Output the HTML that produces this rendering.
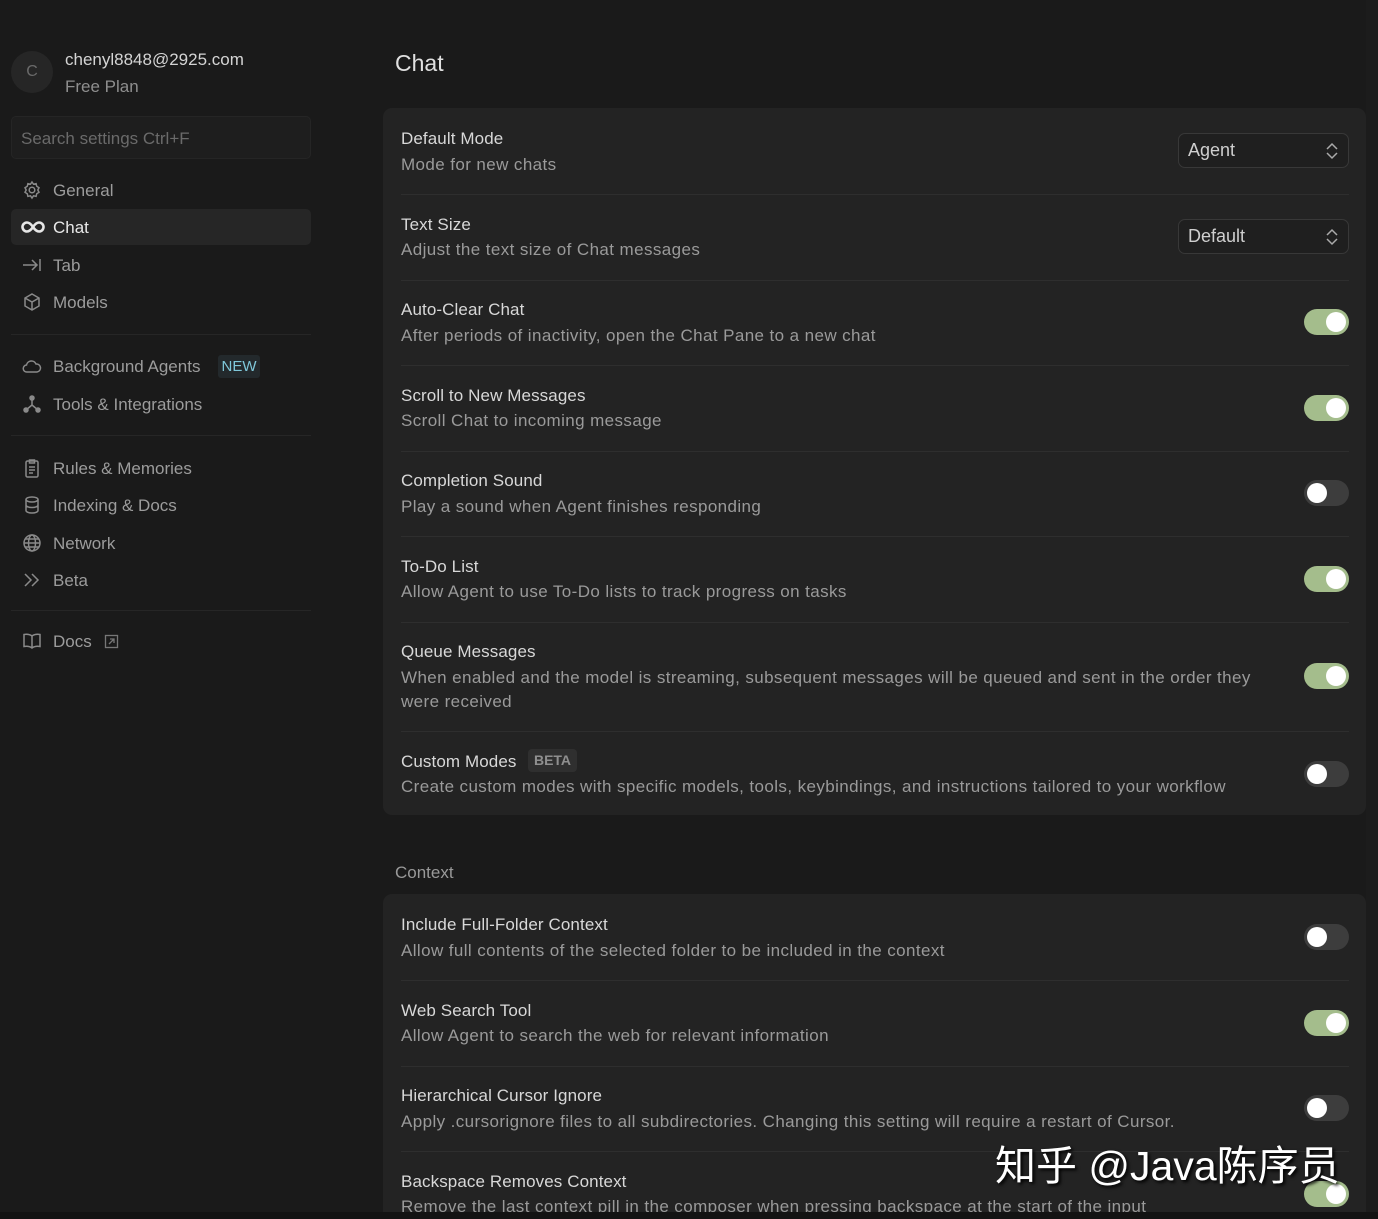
<!DOCTYPE html>
<html><head><meta charset="utf-8"><style>
*{margin:0;padding:0;box-sizing:border-box}
html,body{width:1378px;height:1219px;overflow:hidden}
body{background:#1a1a1a;font-family:"Liberation Sans","Noto Sans CJK SC",sans-serif;position:relative;color:#d6d6d6}
.a{position:absolute;white-space:nowrap}
.nav{font-size:17px;color:#9c9c9c}
.ic{position:absolute;left:22px;width:20px;height:20px}
.card{position:absolute;left:383px;width:983px;background:#232323;border-radius:9px;overflow:hidden}
.t{position:absolute;left:18px;font-size:17px;color:#d8d8d8;white-space:nowrap;letter-spacing:0.1px}
.d{position:absolute;left:18px;font-size:17px;color:#9a9a9a;white-space:nowrap;letter-spacing:0.4px}
.sep{position:absolute;left:18px;right:17px;height:1px;background:#2e2e2e}
.tg{position:absolute;left:921px;width:45px;height:26px;border-radius:13px}
.on{background:#a4bd8c}.off{background:#3d3d3d}
.tg:after{content:"";position:absolute;top:3px;width:20px;height:20px;border-radius:50%;background:#fff}
.on:after{right:3px}.off:after{left:3px}
.sel{position:absolute;left:795px;width:171px;height:35px;border:1px solid #383838;border-radius:7px;background:#1f1f1f;font-size:18px;color:#cfcfcf;padding:6px 9px}
.sel svg{position:absolute;right:9px;top:8px}
</style></head><body>
<div style="position:absolute;left:1366px;top:0;width:12px;height:1219px;background:#1c1c1c"></div>
<div class="a" style="left:11px;top:51px;width:42px;height:42px;border-radius:50%;background:#262626;color:#6a6a6a;font-size:16px;text-align:center;line-height:42px">C</div>
<div class="a" style="left:65px;top:50px;font-size:17px;color:#d4d4d4">chenyl8848@2925.com</div>
<div class="a" style="left:65px;top:77px;font-size:17px;color:#8e8e8e">Free Plan</div>
<div class="a" style="left:11px;top:116px;width:300px;height:43px;background:#1e1e1e;border:1px solid #252525;border-radius:5px"></div>
<div class="a" style="left:21px;top:129px;font-size:17px;color:#6a6a6a">Search settings Ctrl+F</div>
<div class="a" style="left:11px;top:209px;width:300px;height:36px;background:#262626;border-radius:5px"></div>
<svg class="ic" style="top:180px" viewBox="0 0 20 20" fill="none" stroke="#8a8a8a" stroke-width="1.5"><circle cx="10" cy="10" r="2.8"/><path d="M10 2l1.5 2.2 2.6-.6.6 2.6L17 7.7l-1.2 2.3L17 12.3l-2.3 1.5-.6 2.6-2.6-.6L10 18l-1.5-2.2-2.6.6-.6-2.6L3 12.3 4.2 10 3 7.7l2.3-1.5.6-2.6 2.6.6z"/></svg>
<div class="a nav" style="left:53px;top:181px">General</div>
<svg class="ic" style="top:217px;width:24px;left:21px" viewBox="0 0 24 20" fill="none" stroke="#e6e6e6" stroke-width="2.6"><path d="M12 10c-2-3-4-4.5-6-4.5a4.5 4.5 0 000 9c2 0 4-1.5 6-4.5s4-4.5 6-4.5a4.5 4.5 0 010 9c-2 0-4-1.5-6-4.5z"/></svg>
<div class="a nav" style="left:53px;top:218px;color:#e8e8e8">Chat</div>
<svg class="ic" style="top:255px" viewBox="0 0 20 20" fill="none" stroke="#8a8a8a" stroke-width="1.5"><path d="M1 10h14M10 5l5 5-5 5M18 4v12"/></svg>
<div class="a nav" style="left:53px;top:256px">Tab</div>
<svg class="ic" style="top:292px" viewBox="0 0 20 20" fill="none" stroke="#8a8a8a" stroke-width="1.5"><path d="M10 2l7 4v8l-7 4-7-4V6zM3 6l7 4 7-4M10 10v8"/></svg>
<div class="a nav" style="left:53px;top:293px">Models</div>
<div class="a" style="left:11px;top:334px;width:300px;height:1px;background:#262626"></div>
<svg class="ic" style="top:357px" viewBox="0 0 20 20" fill="none" stroke="#8a8a8a" stroke-width="1.5"><path d="M5 15a3.5 3.5 0 01-.5-7A5 5 0 0114 7a4 4 0 011 8z"/></svg>
<div class="a nav" style="left:53px;top:357px">Background Agents</div>
<div class="a" style="left:218px;top:355px;width:42px;height:23px;background:#23292c;border-radius:3px;color:#7fc7d9;font-size:15px;text-align:center;line-height:23px">NEW</div>
<svg class="ic" style="top:394px" viewBox="0 0 20 20" fill="#8a8a8a" stroke="#8a8a8a" stroke-width="1.5"><path d="M10 3v8M10 11l-6 5M10 11l6 5" fill="none"/><circle cx="10" cy="4" r="2"/><circle cx="4" cy="16" r="2"/><circle cx="16" cy="16" r="2"/></svg>
<div class="a nav" style="left:53px;top:395px">Tools &amp; Integrations</div>
<div class="a" style="left:11px;top:435px;width:300px;height:1px;background:#262626"></div>
<svg class="ic" style="top:458px" viewBox="0 0 20 20" fill="none" stroke="#8a8a8a" stroke-width="1.5"><rect x="4" y="3" width="12" height="16" rx="1.5"/><path d="M7.5 2h5v3h-5zM7 9h6M7 12h6M7 15h4"/></svg>
<div class="a nav" style="left:53px;top:459px">Rules &amp; Memories</div>
<svg class="ic" style="top:495px" viewBox="0 0 20 20" fill="none" stroke="#8a8a8a" stroke-width="1.5"><ellipse cx="10" cy="4.5" rx="6" ry="2.5"/><path d="M4 4.5v11c0 1.4 2.7 2.5 6 2.5s6-1.1 6-2.5v-11M4 10c0 1.4 2.7 2.5 6 2.5s6-1.1 6-2.5"/></svg>
<div class="a nav" style="left:53px;top:496px">Indexing &amp; Docs</div>
<svg class="ic" style="top:533px" viewBox="0 0 20 20" fill="none" stroke="#8a8a8a" stroke-width="1.5"><circle cx="10" cy="10" r="8"/><ellipse cx="10" cy="10" rx="3.5" ry="8"/><path d="M2 10h16M3.5 6h13M3.5 14h13"/></svg>
<div class="a nav" style="left:53px;top:534px">Network</div>
<svg class="ic" style="top:570px" viewBox="0 0 20 20" fill="none" stroke="#8a8a8a" stroke-width="1.5"><path d="M3 4l6 6-6 6M10 4l6 6-6 6"/></svg>
<div class="a nav" style="left:53px;top:571px">Beta</div>
<div class="a" style="left:11px;top:610px;width:300px;height:1px;background:#262626"></div>
<svg class="ic" style="top:631px" viewBox="0 0 20 20" fill="none" stroke="#8a8a8a" stroke-width="1.5"><path d="M10 5c-2-1.5-5-2-8-1.5v12c3-.5 6 0 8 1.5 2-1.5 5-2 8-1.5v-12c-3-.5-6 0-8 1.5zM10 5v12"/></svg>
<div class="a nav" style="left:53px;top:632px">Docs</div>
<svg class="a" style="left:104px;top:634px;width:15px;height:15px" viewBox="0 0 15 15" fill="none" stroke="#777" stroke-width="1.3"><rect x="1.5" y="1.5" width="12" height="12"/><path d="M5 10l5-5M6 5h4v4"/></svg>

<div class="a" style="left:395px;top:50px;font-size:23px;color:#e0e0e0">Chat</div>
<div class="card" style="top:108px;height:707px">
<div class="t" style="top:21px">Default Mode</div><div class="d" style="top:47px">Mode for new chats</div>
<div class="sel" style="top:25px">Agent<svg width="14" height="18" viewBox="0 0 14 18" fill="none" stroke="#aaa" stroke-width="1.5"><path d="M2 7l5-5 5 5M2 11l5 5 5-5"/></svg></div>
<div class="sep" style="top:86px"></div>
<div class="t" style="top:107px">Text Size</div><div class="d" style="top:132px">Adjust the text size of Chat messages</div>
<div class="sel" style="top:111px">Default<svg width="14" height="18" viewBox="0 0 14 18" fill="none" stroke="#aaa" stroke-width="1.5"><path d="M2 7l5-5 5 5M2 11l5 5 5-5"/></svg></div>
<div class="sep" style="top:172px"></div>
<div class="t" style="top:192px">Auto-Clear Chat</div><div class="d" style="top:218px">After periods of inactivity, open the Chat Pane to a new chat</div>
<div class="tg on" style="top:201px"></div>
<div class="sep" style="top:257px"></div>
<div class="t" style="top:278px">Scroll to New Messages</div><div class="d" style="top:303px">Scroll Chat to incoming message</div>
<div class="tg on" style="top:287px"></div>
<div class="sep" style="top:343px"></div>
<div class="t" style="top:363px">Completion Sound</div><div class="d" style="top:389px">Play a sound when Agent finishes responding</div>
<div class="tg off" style="top:372px"></div>
<div class="sep" style="top:428px"></div>
<div class="t" style="top:449px">To-Do List</div><div class="d" style="top:474px">Allow Agent to use To-Do lists to track progress on tasks</div>
<div class="tg on" style="top:458px"></div>
<div class="sep" style="top:514px"></div>
<div class="t" style="top:534px">Queue Messages</div><div class="d" style="top:560px">When enabled and the model is streaming, subsequent messages will be queued and sent in the order they</div><div class="d" style="top:584px">were received</div>
<div class="tg on" style="top:555px"></div>
<div class="sep" style="top:623px"></div>
<div class="t" style="top:644px">Custom Modes</div>
<div class="a" style="left:145px;top:641px;width:49px;height:23px;background:#2f2f2f;border-radius:4px;color:#8f8f8f;font-size:14px;font-weight:bold;text-align:center;line-height:23px">BETA</div>
<div class="d" style="top:669px">Create custom modes with specific models, tools, keybindings, and instructions tailored to your workflow</div>
<div class="tg off" style="top:653px"></div>
</div>
<div class="a" style="left:395px;top:863px;font-size:17px;color:#999">Context</div>
<div class="card" style="top:894px;height:318px;border-radius:9px 9px 0 0">
<div class="t" style="top:21px">Include Full-Folder Context</div><div class="d" style="top:47px">Allow full contents of the selected folder to be included in the context</div>
<div class="tg off" style="top:30px"></div>
<div class="sep" style="top:86px"></div>
<div class="t" style="top:107px">Web Search Tool</div><div class="d" style="top:132px">Allow Agent to search the web for relevant information</div>
<div class="tg on" style="top:116px"></div>
<div class="sep" style="top:172px"></div>
<div class="t" style="top:192px">Hierarchical Cursor Ignore</div><div class="d" style="top:218px">Apply .cursorignore files to all subdirectories. Changing this setting will require a restart of Cursor.</div>
<div class="tg off" style="top:201px"></div>
<div class="sep" style="top:257px"></div>
<div class="t" style="top:278px">Backspace Removes Context</div><div class="d" style="top:303px">Remove the last context pill in the composer when pressing backspace at the start of the input</div>
<div class="tg on" style="top:287px"></div>
</div>
<div class="a" style="left:0;top:1212px;width:1378px;height:7px;background:#131313"></div>
<div class="a" style="left:995px;top:1132px;font-size:41px;color:#fff;text-shadow:2px 2px 3px #000;font-family:'Liberation Sans','Noto Sans CJK SC',sans-serif">知乎 @Java陈序员</div>
</body></html>
